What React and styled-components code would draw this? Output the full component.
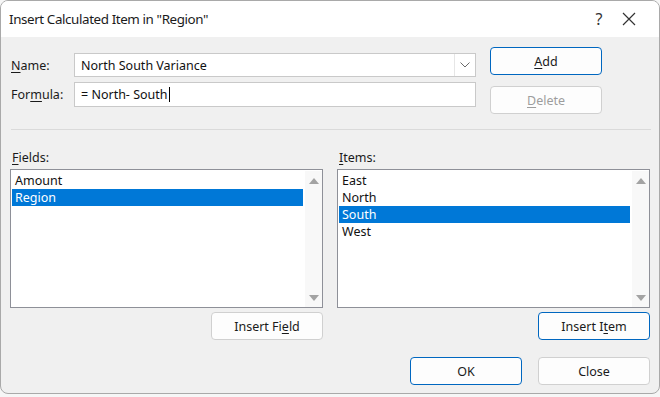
import React from "react";
import styled, { createGlobalStyle } from "styled-components";

const Global = createGlobalStyle`
  html, body { margin: 0; padding: 0; background: #f6f6f6; }
  body { font-family: "Noto Sans", "Open Sans", sans-serif; }
  * { box-sizing: border-box; }
`;

const Dialog = styled.div`
  width: 660px;
  height: 394px;
  border: 1px solid #a9a9a9;
  border-radius: 8px;
  background: #f0f0f0;
  overflow: hidden;
  display: flex;
  flex-direction: column;
  font-size: 12px;
  color: #1a1a1a;
`;

const TitleBar = styled.div`
  height: 36px;
  background: #ffffff;
  display: flex;
  align-items: center;
  padding-left: 8px;
`;

const Title = styled.div`
  flex: 1;
  font-size: 13.4px;
  color: #1b1b1b;
  letter-spacing: -0.4px;
`;

const TitleButton = styled.div`
  width: 30px;
  height: 30px;
  display: flex;
  align-items: center;
  justify-content: center;
  font-size: 16px;
  color: #333;
  margin-right: ${(p) => p.$mr || 0}px;
`;

const Body = styled.div`
  flex: 1;
  display: flex;
  flex-direction: column;
  padding: 10px 9px 0 9px;
`;

const TopSection = styled.div`
  display: flex;
  align-items: flex-start;
`;

const FormGrid = styled.div`
  display: grid;
  grid-template-columns: 64px 402px;
  row-gap: 5px;
  margin-top: 6px;
  align-items: center;
`;

const Label = styled.div`
  font-size: 12.5px;
  color: #1a1a1a;
  padding-left: ${(p) => p.$pl || 0}px;
`;

const Field = styled.div`
  height: ${(p) => p.$h}px;
  background: #fff;
  border: 1px solid #c9c9c9;
  display: flex;
  align-items: center;
  padding-left: 6px;
  padding-right: ${(p) => (p.$combo ? 0 : 6)}px;
  font-size: 12.5px;
  color: #111;
`;

const FieldText = styled.div`
  flex: 1;
  display: flex;
  align-items: center;
`;

const Caret = styled.span`
  display: inline-block;
  width: 1px;
  height: 15px;
  background: #000;
  margin-left: 1px;
`;

const ComboButton = styled.div`
  width: 21px;
  height: 100%;
  border-left: 1px solid #e6e6e6;
  display: flex;
  align-items: center;
  justify-content: center;
`;

const ButtonColumn = styled.div`
  display: flex;
  flex-direction: column;
  gap: 11px;
  margin-left: 14px;
`;

const Button = styled.div`
  width: 112px;
  height: 28px;
  border-radius: 4px;
  background: #fdfdfd;
  border: ${(p) => (p.$default ? "1.5px solid #0067c0" : "1px solid #d0d0d0")};
  display: flex;
  align-items: center;
  justify-content: center;
  font-size: 12.5px;
  color: ${(p) => (p.$disabled ? "#9d9d9d" : "#1a1a1a")};
`;

const Separator = styled.div`
  height: 1px;
  background: #dadada;
  margin: 15px 0 0 1px;
  width: 640px;
`;

const Lists = styled.div`
  display: flex;
  gap: 14px;
  margin-top: 19px;
`;

const ListColumn = styled.div`
  width: 313px;
  display: flex;
  flex-direction: column;
`;

const ListLabel = styled.div`
  font-size: 12.5px;
  height: 20px;
  padding-left: 2px;
`;

const ListBox = styled.div`
  height: 139px;
  background: #fff;
  border: 1px solid #8e9098;
  display: flex;
  padding: 1px 0 0 1px;
`;

const Items = styled.div`
  flex: 1;
  display: flex;
  flex-direction: column;
  padding-top: 1px;
`;

const Item = styled.div`
  height: 17px;
  line-height: 17px;
  padding-left: 3px;
  font-size: 12.5px;
  margin-right: 2px;
  background: ${(p) => (p.$selected ? "#0078d7" : "transparent")};
  color: ${(p) => (p.$selected ? "#fff" : "#111")};
`;

const ScrollBar = styled.div`
  width: 17px;
  background: #f8f8f8;
  display: flex;
  flex-direction: column;
  justify-content: space-between;
  align-items: center;
  padding: 7px 0 6px;
`;

const Arrow = styled.div`
  width: 0;
  height: 0;
  border-left: 5px solid transparent;
  border-right: 5px solid transparent;
  ${(p) =>
    p.$up
      ? "border-bottom: 6px solid #a3a3a3;"
      : "border-top: 6px solid #a3a3a3;"}
`;

const ListFooter = styled.div`
  display: flex;
  justify-content: flex-end;
  margin-top: 4px;
`;

const BottomRow = styled.div`
  display: flex;
  justify-content: flex-end;
  gap: 16px;
  margin-top: 17px;
`;

const U = styled.u`
  text-underline-offset: 2px;
  text-decoration-thickness: 1px;
`;

function List({ label, items, selected }) {
  return (
    <>
      <ListLabel>{label}</ListLabel>
      <ListBox>
        <Items>
          {items.map((it) => (
            <Item key={it} $selected={it === selected}>
              {it}
            </Item>
          ))}
        </Items>
        <ScrollBar>
          <Arrow $up />
          <Arrow />
        </ScrollBar>
      </ListBox>
    </>
  );
}

export default function App() {
  return (
    <>
      <Global />
      <Dialog>
        <TitleBar>
          <Title>Insert Calculated Item in "Region"</Title>
          <TitleButton $mr={0}>?</TitleButton>
          <TitleButton $mr={15}>
            <svg width="14" height="14" viewBox="0 0 14 14">
              <path d="M1 1L13 13M13 1L1 13" stroke="#333" strokeWidth="1.2" fill="none" />
            </svg>
          </TitleButton>
        </TitleBar>
        <Body>
          <TopSection>
            <FormGrid>
              <Label $pl={1}>
                <U>N</U>ame:
              </Label>
              <Field $h={24} $combo>
                <FieldText>North South Variance</FieldText>
                <ComboButton>
                  <svg width="10" height="6" viewBox="0 0 10 6">
                    <path d="M0.5 0.5L5 5L9.5 0.5" stroke="#6a6a6a" strokeWidth="1" fill="none" />
                  </svg>
                </ComboButton>
              </Field>
              <Label $pl={1}>
                For<U>m</U>ula:
              </Label>
              <Field $h={25}>
                <FieldText>
                  = North- South
                  <Caret />
                </FieldText>
              </Field>
            </FormGrid>
            <ButtonColumn>
              <Button $default>
                <span>
                  <U>A</U>dd
                </span>
              </Button>
              <Button $disabled>
                <span>
                  <U>D</U>elete
                </span>
              </Button>
            </ButtonColumn>
          </TopSection>
          <Separator />
          <Lists>
            <ListColumn>
              <List
                label={
                  <span>
                    <U>F</U>ields:
                  </span>
                }
                items={["Amount", "Region"]}
                selected="Region"
              />
              <ListFooter>
                <Button>
                  <span>
                    Insert Fi<U>e</U>ld
                  </span>
                </Button>
              </ListFooter>
            </ListColumn>
            <ListColumn>
              <List
                label={
                  <span>
                    <U>I</U>tems:
                  </span>
                }
                items={["East", "North", "South", "West"]}
                selected="South"
              />
              <ListFooter>
                <Button $default>
                  <span>
                    Insert I<U>t</U>em
                  </span>
                </Button>
              </ListFooter>
            </ListColumn>
          </Lists>
          <BottomRow>
            <Button $default>OK</Button>
            <Button>Close</Button>
          </BottomRow>
        </Body>
      </Dialog>
    </>
  );
}
